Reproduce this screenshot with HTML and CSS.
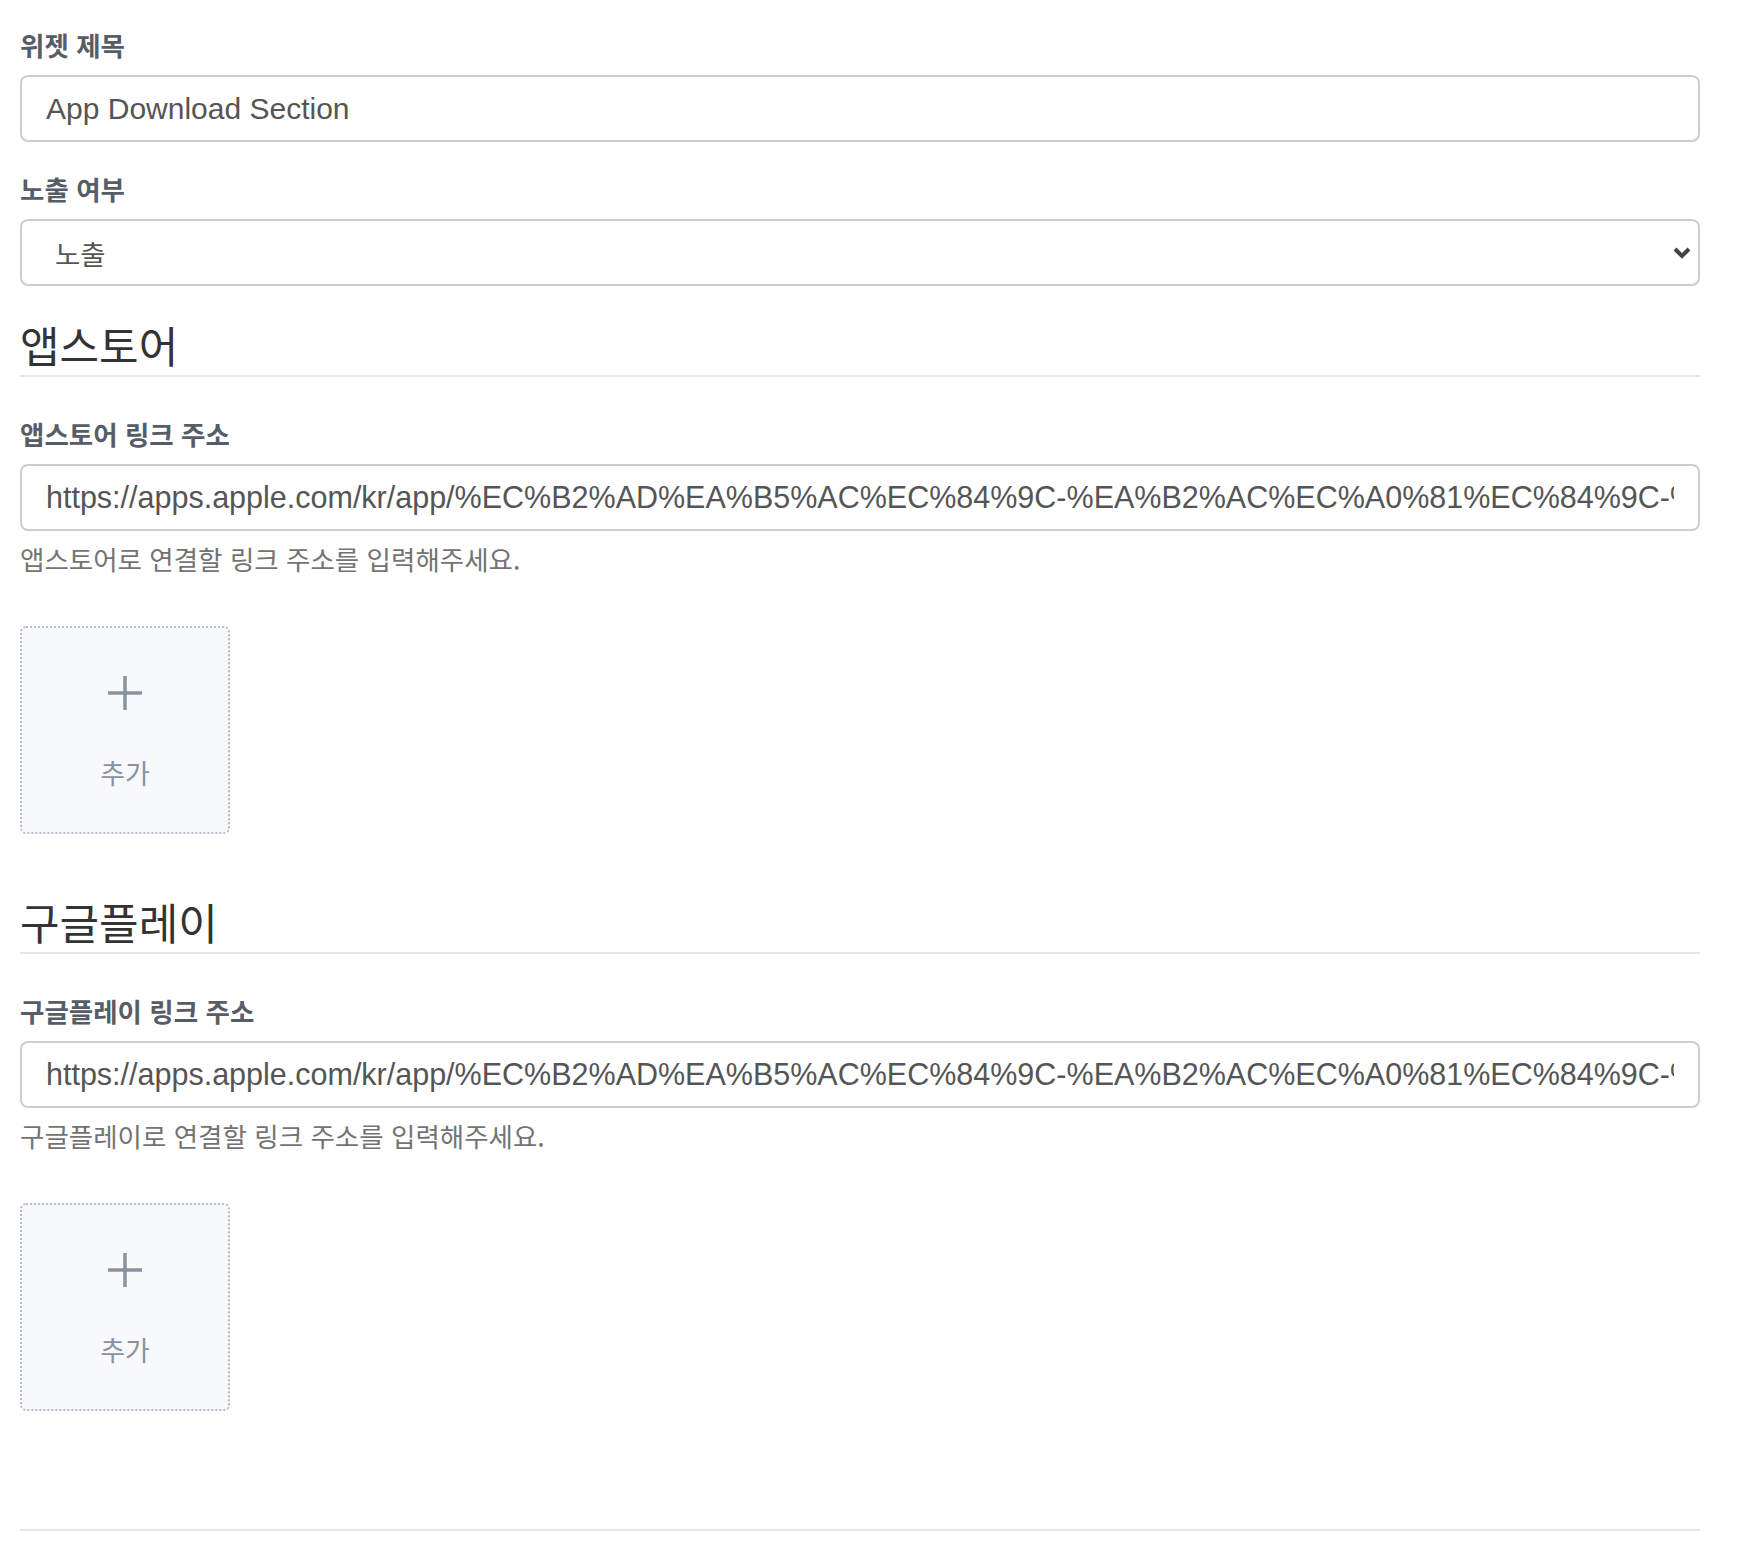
FILE: index.html
```html
<!DOCTYPE html>
<html lang="ko">
<head>
    <meta charset="UTF-8">
    <meta name="viewport" content="width=device-width, initial-scale=1.0">
    <title>위젯 설정</title>
    <link rel="stylesheet" href="styles.css">
</head>
<body>
    <div class="widget-form">
        <div class="form-group">
            <label for="widget-title">위젯 제목</label>
            <input type="text" id="widget-title" class="form-control" value="App Download Section">
        </div>
        <div class="form-group">
            <label for="widget-visible">노출 여부</label>
            <div class="select-wrap">
                <select id="widget-visible" class="form-control">
                    <option selected>노출</option>
                    <option>미노출</option>
                </select>
                <svg class="select-arrow" width="20" height="14" viewBox="0 0 20 14">
                    <path d="M3 3 L10 10 L17 3" fill="none" stroke="#444" stroke-width="4"/>
                </svg>
            </div>
        </div>

        <!-- 앱스토어 -->
        <div class="section">
            <h3 class="section-title">앱스토어</h3>
            <div class="form-group">
                <label for="appstore-link">앱스토어 링크 주소</label>
                <input type="text" id="appstore-link" class="form-control link-input" value="https://apps.apple.com/kr/app/%EC%B2%AD%EA%B5%AC%EC%84%9C-%EA%B2%AC%EC%A0%81%EC%84%9C-%EB%A7%8C%EB%93%A4%EA%B8%B0/id1234567890">
                <div class="help-text">앱스토어로 연결할 링크 주소를 입력해주세요.</div>
            </div>
            <div class="add-box">
                <svg width="34" height="34" viewBox="0 0 34 34">
                    <path d="M17 0 V34 M0 17 H34" stroke="#8a92a2" stroke-width="3.5"/>
                </svg>
                <span>추가</span>
            </div>
        </div>

        <!-- 구글플레이 -->
        <div class="section">
            <h3 class="section-title">구글플레이</h3>
            <div class="form-group">
                <label for="playstore-link">구글플레이 링크 주소</label>
                <input type="text" id="playstore-link" class="form-control link-input" value="https://apps.apple.com/kr/app/%EC%B2%AD%EA%B5%AC%EC%84%9C-%EA%B2%AC%EC%A0%81%EC%84%9C-%EB%A7%8C%EB%93%A4%EA%B8%B0/id1234567890">
                <div class="help-text">구글플레이로 연결할 링크 주소를 입력해주세요.</div>
            </div>
            <div class="add-box">
                <svg width="34" height="34" viewBox="0 0 34 34">
                    <path d="M17 0 V34 M0 17 H34" stroke="#8a92a2" stroke-width="3.5"/>
                </svg>
                <span>추가</span>
            </div>
        </div>

        <hr class="form-end">
    </div>
</body>
</html>
```

FILE: styles.css
```css
body {
    margin: 0;
    background-color: #fff;
    font-family: "Noto Sans CJK KR", "Open Sans", sans-serif;
    color: #333;
}
.widget-form {
    width: 1680px;
    padding: 27px 0 0 20px;
}
.form-group {
    margin-bottom: 29px;
}
.form-group label {
    display: block;
    font-size: 26.5px;
    line-height: 36px;
    font-weight: bold;
    color: #575d66;
    margin-bottom: 12px;
}
.form-control {
    display: block;
    width: 100%;
    height: 67px;
    box-sizing: border-box;
    padding: 0 24px;
    border: 2px solid #cdcdcd;
    border-radius: 8px;
    background-color: #fff;
    font-family: "Liberation Sans", "Noto Sans CJK KR", sans-serif;
    font-size: 30px;
    color: #555;
    outline: none;
}
.link-input {
    font-size: 30.5px;
}
.select-wrap {
    position: relative;
}
select.form-control {
    appearance: none;
    -webkit-appearance: none;
    padding-left: 33px;
    font-family: "Noto Sans CJK KR", sans-serif;
    font-size: 27.5px;
}
.select-arrow {
    position: absolute;
    right: 8px;
    top: 27px;
    pointer-events: none;
}
.help-text {
    margin-top: 10px;
    font-size: 26.5px;
    line-height: 36px;
    color: #737373;
}
.section {
    margin-top: 34px;
}
.section-title {
    margin: 0 0 39px 0;
    padding-bottom: 7px;
    border-bottom: 2px solid #e6e6e6;
    font-size: 43px;
    line-height: 48px;
    font-weight: normal;
    color: #333;
}
.section .form-group {
    margin-bottom: 49px;
}
.add-box {
    width: 210px;
    height: 208px;
    box-sizing: border-box;
    padding-top: 6px;
    border: 2px dotted #b8bcc4;
    border-radius: 6px;
    background-color: #f8f9fb;
    display: flex;
    flex-direction: column;
    align-items: center;
    justify-content: center;
    gap: 46px;
    margin-bottom: 63px;
}
.add-box span {
    font-size: 27px;
    line-height: 34px;
    color: #8a92a2;
}
.form-end {
    margin: 118px 0 0 0;
    border: none;
    border-top: 2px solid #e6e6e6;
}
```
